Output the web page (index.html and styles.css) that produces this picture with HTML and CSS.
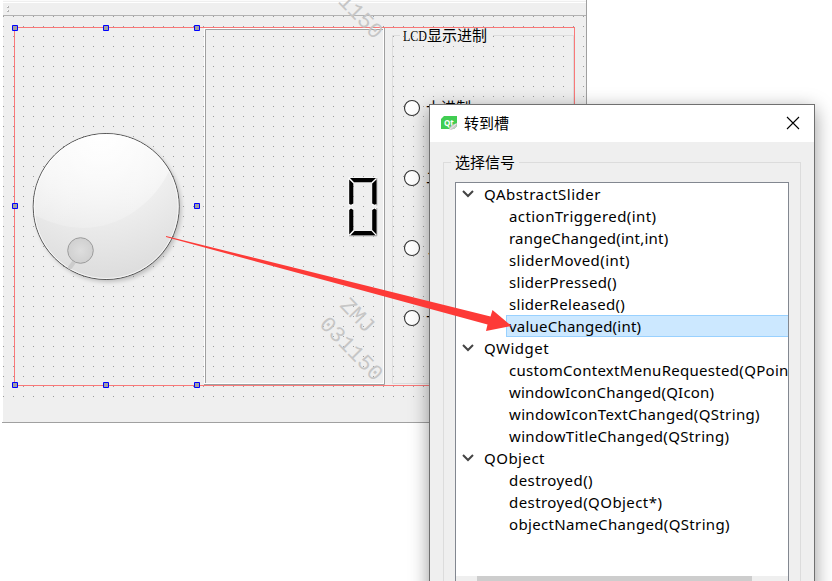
FILE: index.html
```html
<!DOCTYPE html>
<html lang="zh-CN">
<head>
<meta charset="utf-8">
<title>转到槽</title>
<link rel="stylesheet" href="styles.css">
</head>
<body>
<main class="desktop">
  <svg class="form" width="600" height="430" viewBox="0 0 600 430">
    <defs>
      <pattern id="dots" x="3" y="16" width="10" height="10" patternUnits="userSpaceOnUse"><rect width="1" height="1" fill="#9a9a9a"/></pattern>
      <radialGradient id="face" gradientUnits="userSpaceOnUse" cx="101" cy="133" r="155"><stop offset="0" stop-color="#fff"/><stop offset=".45" stop-color="#f1f1f1"/><stop offset="1" stop-color="#dadada"/></radialGradient>
      <linearGradient id="gloss" x1="0" y1="0" x2="0" y2="1"><stop offset="0" stop-color="#fff" stop-opacity=".65"/><stop offset="1" stop-color="#fff" stop-opacity=".18"/></linearGradient>
      <radialGradient id="knob"><stop offset="0" stop-color="#dedede"/><stop offset="1" stop-color="#d0d0d0"/></radialGradient>
      <clipPath id="disc"><circle cx="106.2" cy="206.5" r="72"/></clipPath>
      <filter id="soft" x="-20%" y="-20%" width="140%" height="140%"><feGaussianBlur stdDeviation="2.2"/></filter>
    </defs>
    <rect x="3" y="0" width="584" height="423" fill="#efefef"/>
    <rect x="3" y="0" width="583" height="1" fill="#fbfbfb"/>
    <rect x="3" y="2" width="583" height="1" fill="#fff"/>
    <path d="M7 6h2v2h-2zM7 10h2v2h-2z" fill="#b4b4b4"/>
    <path d="M7 6h1v1h-1zM7 10h1v1h-1z" fill="#fff"/>
    <rect x="3" y="15" width="583" height="1" fill="#b2b2b2"/>
    <rect x="3" y="16" width="582" height="387" fill="url(#dots)"/>
    <path d="M2 422.5H586.5V0" fill="none" stroke="#a0a0a0"/>
    <rect x="14.500" y="27.500" width="560" height="358" fill="none" stroke="#f97878"/>
    <path d="M204.500 384V28.500H383.500V383.500H205" fill="none" stroke="#fff"/>
    <path d="M205.500 383V29.500H383M384.500 28V384.500H204" fill="none" stroke="#a0a0a0"/>
    <path d="M400 35.500H392.500V383.500H573.500V35.500H493" fill="none" stroke="#dcdcdc"/>
    <g class="form-text">
      <text class="latin" x="403" y="41" textLength="24" lengthAdjust="spacingAndGlyphs">LCD</text>
      <text x="427" y="41">显示进制</text>
      <text x="426" y="113">十进制</text>
      <text x="426" y="183">二进制</text>
      <text x="428" y="253">八进制</text>
      <text x="426" y="323">十六进制</text>
    </g>
    <g fill="#fff" stroke="#333" stroke-width="1.1">
      <circle cx="412" cy="108" r="7.500"/><circle cx="412" cy="178" r="7.500"/><circle cx="412" cy="248" r="7.500"/><circle cx="412" cy="318" r="7.500"/>
    </g>
    <circle cx="108.500" cy="209" r="73" fill="#000" opacity=".2" filter="url(#soft)"/>
    <circle cx="106.200" cy="206.500" r="73" fill="url(#face)" stroke="#555" stroke-width="1"/>
    <circle cx="106.200" cy="206.500" r="72" fill="none" stroke="#fff" stroke-opacity=".75"/>
    <path clip-path="url(#disc)" d="M32 214Q60 228 83 228C120 228 155 203 170 169V130H30Z" fill="url(#gloss)"/>
    <path d="M74 262L69 269" stroke="#ccc" stroke-width="4"/>
    <circle cx="80.500" cy="250.500" r="12.800" fill="url(#knob)" stroke="#9c9c9c" stroke-width="1"/>
    <g stroke-linejoin="miter">
      <path d="M348.500 177.500H377V236H348.500ZM353 182V231H372V182Z" fill="#fff" fill-rule="evenodd"/>
      <path d="M349 235.800H376.800V178" fill="none" stroke="#a0a0a0"/>
      <path d="M350 178H376L371.500 182.300H354ZM349.200 179.500L353.300 183.500V203.500L351 204.800L349.200 204ZM376.500 179.500L372.200 183.500V203.500L374.500 204.800L376.500 204ZM349.200 210L351 208.500L353.300 210V230L349.200 234.500ZM376.500 210L374.500 208.500L372.200 210V230L376.500 234.500ZM350.500 235.200L354.500 231H371.500L375.500 235.200Z"/>
      <path d="M348 205.500H354V208H348ZM371.500 205.500H378V208H371.500Z" fill="#efefef"/>
    </g>
    <g class="watermark">
      <text transform="translate(339 306) rotate(46)" textLength="39">ZMJ</text>
      <text transform="translate(318.500 325) rotate(45.500)" textLength="80">031150</text>
      <text transform="translate(318.500 -17) rotate(45.500)" textLength="80">031150</text>
    </g>
    <g fill="#a0a0a4" stroke="#00f">
      <path d="M12.500 25.500h5v5h-5zM103.500 25.500h5v5h-5zM194.500 25.500h5v5h-5zM12.500 203.500h5v5h-5zM194.500 203.500h5v5h-5zM12.500 382.500h5v5h-5zM103.500 382.500h5v5h-5zM194.500 382.500h5v5h-5z"/>
    </g>
  </svg>

  <section class="dialog">
    <header class="titlebar">
      <svg class="logo" width="17" height="16" viewBox="0 0 17 16"><path d="M3 1H16V11L13 14H0V4Z" fill="#41cd52"/><text x="3" y="10.500" class="logo-text">Qt</text><path d="M8 14Q9 10 16 8Q17 13 10 15Z" fill="#c9c9c9"/><path d="M8 15L15 9" stroke="#eee"/></svg>
      <h1>转到槽</h1>
      <svg class="close" width="14" height="14" viewBox="0 0 14 14"><path d="M1 1L13 13M13 1L1 13" stroke="#000" stroke-width="1.100"/></svg>
    </header>
    <fieldset class="signals">
      <legend>选择信号</legend>
      <div class="tree">
        <ul>
          <li class="parent"><svg width="12" height="8" viewBox="0 0 12 8"><path d="M1 1L6 6L11 1"/></svg><span>QAbstractSlider</span></li>
          <li class="wide">actionTriggered(int)</li>
          <li class="tight">rangeChanged(int,int)</li>
          <li class="wide">sliderMoved(int)</li>
          <li>sliderPressed()</li>
          <li>sliderReleased()</li>
          <li class="selected tight">valueChanged(int)</li>
          <li class="parent"><svg width="12" height="8" viewBox="0 0 12 8"><path d="M1 1L6 6L11 1"/></svg><span>QWidget</span></li>
          <li>customContextMenuRequested(QPoint)</li>
          <li class="tight">windowIconChanged(QIcon)</li>
          <li class="medium">windowIconTextChanged(QString)</li>
          <li class="medium">windowTitleChanged(QString)</li>
          <li class="parent"><svg width="12" height="8" viewBox="0 0 12 8"><path d="M1 1L6 6L11 1"/></svg><span>QObject</span></li>
          <li class="wide">destroyed()</li>
          <li class="wide">destroyed(QObject*)</li>
          <li class="medium">objectNameChanged(QString)</li>
        </ul>
        <div class="scrollbar"><div class="thumb"></div></div>
      </div>
    </fieldset>
  </section>

  <svg class="arrow" width="832" height="581" viewBox="0 0 832 581"><path d="M166 236L490.500 316.500L492.500 310L511.500 326L486 331L487.500 324.500L166 237Z" fill="#fd3a37"/></svg>
</main>
</body>
</html>
```
FILE: styles.css
```css
* { box-sizing: border-box; }
body { margin: 0; background: #fff; color: #000; font-family: "Noto Sans", "Noto Sans CJK SC", sans-serif; font-size: 15px; }
.desktop { position: relative; width: 832px; height: 581px; overflow: hidden; }
.form { display: block; }
.form-text { font: 400 15px "Noto Sans CJK SC", sans-serif; }
.latin { font: 15.5px "Liberation Serif", serif; }
.watermark { font: 22px "Liberation Mono", monospace; fill: #c6c6c6; }
.dialog { position: absolute; left: 429px; top: 104px; width: 386px; height: 520px; display: flex; flex-direction: column; background: #efefef; border: 1px solid #707070; box-shadow: 0 5px 18px rgba(0, 0, 0, .4); }
.titlebar { height: 37px; flex: none; display: flex; align-items: center; padding: 0 14px 2px 11px; background: #fff; }
.titlebar h1 { margin: 0 auto 0 6px; font: 15px/20px "Noto Sans CJK SC", sans-serif; }
.logo-text { font: bold 8px "Open Sans", sans-serif; fill: #fff; }
.signals { flex: 1; min-width: 0; margin: 10px 13px 0; padding: 10px 11px 0; border: 1px solid #dcdcdc; }
.signals legend { height: 20px; margin-left: -4px; padding: 0 4px; font: 15px/20px "Noto Sans CJK SC", sans-serif; }
.tree { height: 440px; display: flex; flex-direction: column; background: #fff; border: 1px solid #828790; overflow: hidden; }
.tree ul { height: 393px; flex: none; margin: 0; padding: 0; list-style: none; }
.tree li { height: 22px; margin-left: 50px; padding-left: 3px; line-height: 22px; letter-spacing: .3px; white-space: nowrap; }
.tree .tight { letter-spacing: .22px; }
.tree .medium { letter-spacing: .35px; }
.tree .wide { letter-spacing: .43px; }
.tree .parent { display: flex; align-items: center; margin-left: 0; padding-left: 6px; letter-spacing: .48px; }
.parent svg { margin-right: 10px; fill: none; stroke: #444; stroke-width: 2; }
.tree .selected { line-height: 20px; padding-left: 2px; background: #cce8ff; border: 1px solid #99d1ff; border-right: 0; }
.scrollbar { height: 17px; padding: 0 36px 0 21px; background: #efefef; }
.thumb { height: 17px; background: #cdcdcd; }
.arrow { position: absolute; left: 0; top: 0; }
```
